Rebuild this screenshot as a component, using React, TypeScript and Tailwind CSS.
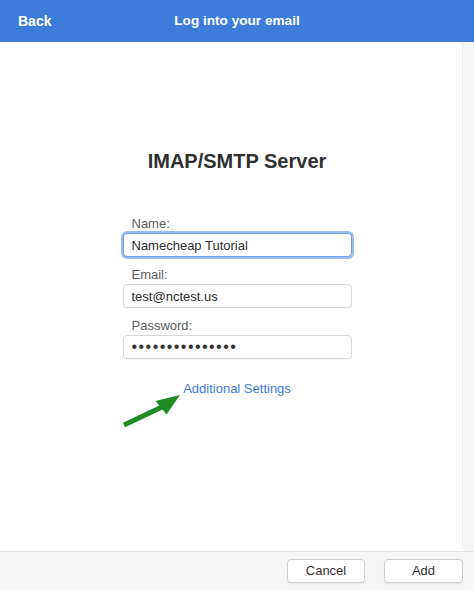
import React from "react";

function Field({
  label,
  value,
  focused,
  password,
  className = "",
}: {
  label: string;
  value: string;
  focused?: boolean;
  password?: boolean;
  className?: string;
}) {
  return (
    <div className={"flex flex-col " + className}>
      <div className="h-[16px] pl-[9px] text-[13px] leading-[16px] text-[#5c5c5c]">{label}</div>
      <div
        className={
          "mt-[1px] flex h-[24px] items-center rounded-[4px] bg-white pl-[8px] text-[13px] text-[#2e2e2e] " +
          (focused
            ? "border border-[#6f9de8] shadow-[0_0_0_2px_#9dbcf0]"
            : "border border-[#d6d6d6] shadow-[0_1px_1px_rgba(0,0,0,0.04)]")
        }
      >
        {password ? (
          <span className="text-[16px] leading-none tracking-[1.45px] text-[#333]">{value}</span>
        ) : (
          <span className="leading-none">{value}</span>
        )}
      </div>
    </div>
  );
}

export default function App() {
  return (
    <div className="flex h-[590px] w-[474px] flex-col overflow-hidden bg-white font-['Liberation_Sans',Arial,sans-serif]">
      <header className="grid h-[42px] shrink-0 grid-cols-[1fr_auto_1fr] items-center bg-[#3e7cdb] px-[18px] text-white">
        <div className="text-[14px] font-bold">Back</div>
        <div className="text-[13.6px] font-bold">Log into your email</div>
        <div />
      </header>

      <main className="relative flex flex-1 flex-col items-center pt-[107px]">
        <div className="absolute bottom-0 right-0 top-0 w-[12px] border-l border-[#ececec] bg-[#f6f6f6]" />

        <h1 className="h-[24px] text-[20px] font-bold leading-[24px] text-[#303030]">IMAP/SMTP Server</h1>

        <div className="mt-[43px] flex w-[229px] flex-col">
          <Field label="Name:" value="Namecheap Tutorial" focused />
          <Field label="Email:" value="test@nctest.us" className="mt-[10px]" />
          <Field label="Password:" value="•••••••••••••••" password className="mt-[10px]" />
        </div>

        <div className="mt-[22px] h-[16px] text-[13px] leading-[16px] text-[#3b7bd8]">Additional Settings</div>

        <svg
          className="absolute left-[118px] top-[348px]"
          width="68"
          height="40"
          viewBox="0 0 68 40"
        >
          <line x1="6" y1="35" x2="44" y2="17" stroke="#1f8b24" strokeWidth="5" />
          <polygon points="62,5 37.5,11 48.5,24.5" fill="#1f8b24" />
        </svg>
      </main>

      <footer className="flex h-[39px] shrink-0 items-center justify-end gap-[19px] border-t border-[#e3e3e3] bg-[#f6f6f6] pr-[11px]">
        <button className="h-[24px] w-[78px] rounded-[4px] border border-[#cfcfcf] bg-white text-[13px] text-[#333] shadow-[0_1px_1px_rgba(0,0,0,0.06)]">
          Cancel
        </button>
        <button className="h-[24px] w-[79px] rounded-[4px] border border-[#cfcfcf] bg-white text-[13px] text-[#333] shadow-[0_1px_1px_rgba(0,0,0,0.06)]">
          Add
        </button>
      </footer>
    </div>
  );
}
